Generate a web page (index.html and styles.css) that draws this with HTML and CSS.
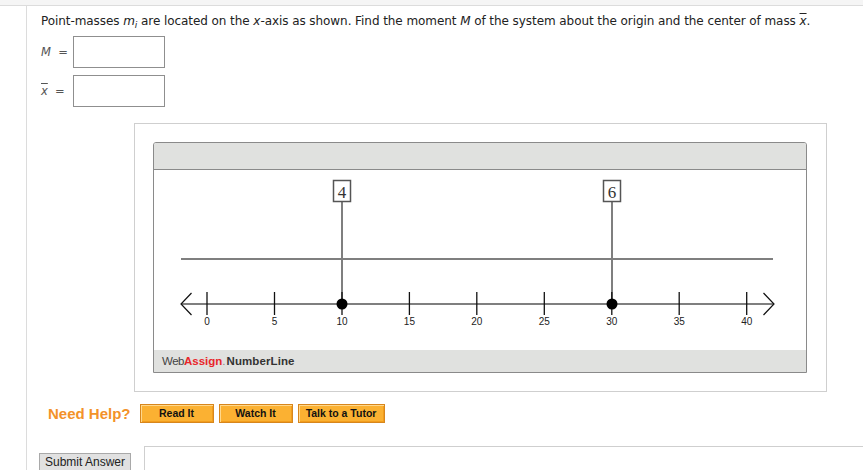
FILE: index.html
```html
<!DOCTYPE html>
<html>
<head>
<meta charset="utf-8">
<link rel="stylesheet" href="styles.css">
</head>
<body>
<div class="topbar"></div>
<div class="page">
  <div class="gutter"></div>
  <main class="content">
    <p class="question">Point-masses <i>m</i><sub><i>i</i></sub> are located on the <i>x</i>-axis as shown. Find the moment <i>M</i> of the system about the origin and the center of mass <i class="bar">x</i>.</p>
    <div class="answer-row"><span class="lbl"><i>M</i>&nbsp; =</span><input class="ans" type="text"></div>
    <div class="answer-row"><span class="lbl"><i class="bar">x</i>&nbsp; =</span><input class="ans" type="text"></div>
    <div class="graph-outer">
      <div class="graph">
        <div class="g-head"></div>
        <svg class="g-body" width="652" height="180" viewBox="0 0 652 180">
          <line x1="27" y1="89" x2="619" y2="89" stroke="#7f7f7f" stroke-width="2"/>
          <line x1="188" y1="32" x2="188" y2="134" stroke="#7f7f7f" stroke-width="2"/>
          <line x1="458" y1="32" x2="458" y2="134" stroke="#7f7f7f" stroke-width="2"/>
          <line x1="27" y1="134" x2="620" y2="134" stroke="#7f7f7f" stroke-width="2"/>
          <g stroke="#111" stroke-width="1.3">
            <line x1="53" y1="122" x2="53" y2="145"/>
            <line x1="120.5" y1="122" x2="120.5" y2="145"/>
            <line x1="188" y1="122" x2="188" y2="145"/>
            <line x1="255.4" y1="122" x2="255.4" y2="145"/>
            <line x1="322.8" y1="122" x2="322.8" y2="145"/>
            <line x1="390.3" y1="122" x2="390.3" y2="145"/>
            <line x1="457.8" y1="122" x2="457.8" y2="145"/>
            <line x1="525.2" y1="122" x2="525.2" y2="145"/>
            <line x1="592.7" y1="122" x2="592.7" y2="145"/>
          </g>
          <g fill="none" stroke="#111" stroke-width="1.2">
            <polyline points="37.5,123 27,134 37.5,145"/>
            <polyline points="609.5,123 620,134 609.5,145"/>
          </g>
          <g class="tick-labels" text-anchor="middle">
            <text x="53" y="155">0</text>
            <text x="120.5" y="155">5</text>
            <text x="188" y="155">10</text>
            <text x="255.4" y="155">15</text>
            <text x="322.8" y="155">20</text>
            <text x="390.3" y="155">25</text>
            <text x="457.8" y="155">30</text>
            <text x="525.2" y="155">35</text>
            <text x="592.7" y="155">40</text>
          </g>
          <circle cx="188" cy="134" r="5.5" fill="#000"/>
          <circle cx="458" cy="134" r="5.5" fill="#000"/>
          <rect x="179.5" y="10.5" width="17" height="21" fill="#fff" stroke="#555" stroke-width="1.5"/>
          <rect x="449.5" y="10.5" width="17" height="21" fill="#fff" stroke="#555" stroke-width="1.5"/>
          <text class="mass" x="188" y="27.5" text-anchor="middle">4</text>
          <text class="mass" x="458" y="27.5" text-anchor="middle">6</text>
        </svg>
        <div class="g-foot"><span class="web">Web</span><span class="assign">Assign</span><span class="dot">.</span><span class="nl">NumberLine</span></div>
      </div>
    </div>
    <div class="help">
      <span class="need">Need Help?</span>
      <button class="hbtn" type="button">Read It</button>
      <button class="hbtn" type="button">Watch It</button>
      <button class="hbtn tutor" type="button">Talk to a Tutor</button>
    </div>
    <div class="submit-row">
      <button class="submit" type="button">Submit Answer</button>
      <div class="response"></div>
    </div>
  </main>
</div>
</body>
</html>
```

FILE: styles.css
```css
html, body {
  margin: 0;
  padding: 0;
  background: #fff;
  overflow: hidden;
}
body {
  font-family: "DejaVu Sans", sans-serif;
  color: #222;
}
.topbar {
  height: 5px;
  background: #f5f5f5;
  border-bottom: 1px solid #dcdcdc;
}
.page {
  display: flex;
  min-height: 470px;
}
.gutter {
  flex: none;
  width: 26px;
  border-right: 1px solid #dcdcdc;
}
.content {
  flex: 1;
  padding-left: 14px;
  min-width: 0;
}
.question {
  margin: 7px 0 0 0;
  font-size: 12px;
  line-height: 16px;
  letter-spacing: -0.07px;
  color: #222;
  white-space: nowrap;
}
.question sub {
  font-size: 9px;
  line-height: 0;
  vertical-align: -3px;
}
.bar {
  text-decoration: overline;
}
.answer-row {
  display: flex;
  align-items: center;
}
.question + .answer-row {
  margin-top: 7px;
}
.answer-row + .answer-row {
  margin-top: 7px;
}
.lbl {
  width: 32px;
  font-size: 11.5px;
  color: #555;
}
.ans {
  box-sizing: border-box;
  width: 92px;
  height: 32px;
  margin: 0;
  padding: 0;
  border: 1px solid #8f8f8f;
  background: #fff;
}
.graph-outer {
  box-sizing: border-box;
  width: 693px;
  margin: 16px 0 0 93px;
  padding: 18px;
  border: 1px solid #cfcfcf;
}
.graph {
  width: 654px;
  box-sizing: border-box;
  border: 1px solid #8a8a8a;
  border-radius: 3px 3px 0 0;
  display: flex;
  flex-direction: column;
}
.g-head {
  height: 26px;
  background: #e0e1df;
  border-bottom: 1px solid #8a8a8a;
  border-radius: 2px 2px 0 0;
}
.g-body {
  display: block;
}
.tick-labels {
  font-family: "Liberation Sans", Arial, sans-serif;
  font-size: 10px;
  fill: #222;
}
.mass {
  font-family: "Liberation Serif", serif;
  font-size: 17px;
  fill: #333;
}
.g-foot {
  height: 22px;
  background: #e0e1df;
  padding-left: 8px;
  display: flex;
  align-items: center;
  font-family: "Liberation Sans", Arial, sans-serif;
  font-size: 11.5px;
}
.web {
  color: #444;
  letter-spacing: -0.5px;
}
.assign {
  color: #e8262b;
  font-weight: bold;
}
.dot {
  color: #888;
  margin-right: 1px;
}
.nl {
  color: #333;
  font-weight: bold;
  letter-spacing: 0.1px;
}
.help {
  display: flex;
  align-items: center;
  margin: 11px 0 0 7px;
  height: 20px;
}
.need {
  font-family: "Liberation Sans", Arial, sans-serif;
  font-weight: bold;
  font-size: 15px;
  color: #f39229;
  margin-right: 9px;
}
.hbtn {
  box-sizing: border-box;
  height: 19px;
  width: 74px;
  margin: 0 5px 0 0;
  padding: 0;
  border: 1px solid #d7861d;
  background: #fbb132;
  box-shadow: inset 1px 1px 0 #ffd88c, inset -1px -1px 0 #f29d1c;
  font-family: "Liberation Sans", Arial, sans-serif;
  font-size: 10.5px;
  font-weight: bold;
  color: #111;
}
.hbtn.tutor {
  width: 87px;
}
.submit-row {
  display: flex;
  align-items: flex-start;
  margin-top: 23px;
  margin-left: -2px;
}
.submit {
  box-sizing: border-box;
  width: 92px;
  height: 18px;
  margin: 7px 13px 0 0;
  padding: 0;
  border: 1px solid #a9a9a9;
  background: #e1e1e1;
  font-family: "Liberation Sans", Arial, sans-serif;
  font-size: 12px;
  color: #222;
}
.response {
  flex: 1;
  height: 40px;
  border: 1px solid #cfcfcf;
  border-right: none;
}
```
